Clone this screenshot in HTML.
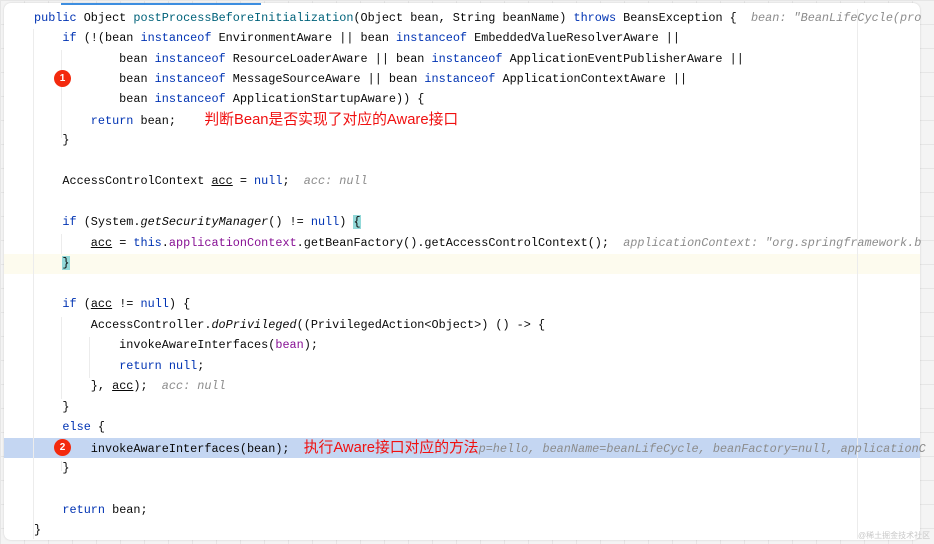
<!DOCTYPE html>
<html><head><meta charset="utf-8"><style>
body{margin:0;width:934px;height:544px;overflow:hidden;background:#f4f4f4;
background-image:linear-gradient(#e6e6e6 1px,transparent 1px),linear-gradient(90deg,#e6e6e6 1px,transparent 1px);background-size:24px 24px;position:relative;font-family:"Liberation Mono",monospace}
.card{position:absolute;left:4px;top:3px;width:916px;height:537px;background:#fff;border-radius:7px;overflow:hidden;box-shadow:0 0 2px rgba(0,0,0,.15)}
.tab{position:absolute;left:57px;top:0;width:200px;height:2px;background:#3d8ee0}
.l{position:absolute;left:0;height:20px;line-height:20px;font-size:11.84px;color:#080808;white-space:pre}
.k{color:#0033b3}.m{color:#00627a}.f{color:#871094}.h{color:#8c8c8c;font-style:italic}.i{font-style:italic}
.p{color:#871094}.u{text-decoration:underline}
.b{background:#93d9d9}
.cn{color:#f01010;font-family:"Liberation Sans","Noto Sans CJK SC",sans-serif;font-size:14.8px}
.dot{position:absolute;width:17px;height:17px;border-radius:50%;background:#f32a0e;color:#fff;font:bold 10px "Liberation Sans",sans-serif;text-align:center;line-height:17px}
.g{position:absolute;width:1px;background:#ececec}
</style></head><body>
<div class="card">
<div class="tab"></div>
<div style="position:absolute;left:0;top:251px;width:916px;height:20px;background:#fdfbee"></div>
<div style="position:absolute;left:0;top:435px;width:916px;height:20px;background:#c4d6f2"></div>
<div class="g" style="left:29px;top:26px;height:510px"></div>
<div class="g" style="left:57px;top:47px;height:88px"></div>
<div class="g" style="left:57px;top:231px;height:20px"></div>
<div class="g" style="left:57px;top:314px;height:82px"></div>
<div class="g" style="left:85px;top:334px;height:41px"></div>
<div class="g" style="left:57px;top:458px;height:10px"></div>
<div class="g" style="left:853px;top:6px;height:530px"></div>
</div>
<div style="position:absolute;left:34px;top:0">
<div class="l" style="top:8px"><span class="k">public</span> Object <span class="m">postProcessBeforeInitialization</span>(Object bean, String beanName) <span class="k">throws</span> BeansException {  <span class="h">bean: "BeanLifeCycle(pro</span></div>
<div class="l" style="top:28px">    <span class="k">if</span> (!(bean <span class="k">instanceof</span> EnvironmentAware || bean <span class="k">instanceof</span> EmbeddedValueResolverAware ||</div>
<div class="l" style="top:49px">            bean <span class="k">instanceof</span> ResourceLoaderAware || bean <span class="k">instanceof</span> ApplicationEventPublisherAware ||</div>
<div class="l" style="top:69px">            bean <span class="k">instanceof</span> MessageSourceAware || bean <span class="k">instanceof</span> ApplicationContextAware ||</div>
<div class="l" style="top:89px">            bean <span class="k">instanceof</span> ApplicationStartupAware)) {</div>
<div class="l" style="top:110px">        <span class="k">return</span> bean;    <span class="cn">判断Bean是否实现了对应的Aware接口</span></div>
<div class="l" style="top:130px">    }</div>
<div class="l" style="top:171px">    AccessControlContext <span class="u">acc</span> = <span class="k">null</span>;  <span class="h">acc: null</span></div>
<div class="l" style="top:212px">    <span class="k">if</span> (System.<span class="i">getSecurityManager</span>() != <span class="k">null</span>) <span class="b">{</span></div>
<div class="l" style="top:233px">        <span class="u">acc</span> = <span class="k">this</span>.<span class="f">applicationContext</span>.getBeanFactory().getAccessControlContext();  <span class="h">applicationContext: "org.springframework.b</span></div>
<div class="l" style="top:253px">    <span class="b">}</span></div>
<div class="l" style="top:294px">    <span class="k">if</span> (<span class="u">acc</span> != <span class="k">null</span>) {</div>
<div class="l" style="top:315px">        AccessController.<span class="i">doPrivileged</span>((PrivilegedAction&lt;Object&gt;) () -&gt; {</div>
<div class="l" style="top:335px">            invokeAwareInterfaces(<span class="p">bean</span>);</div>
<div class="l" style="top:356px">            <span class="k">return null</span>;</div>
<div class="l" style="top:376px">        }, <span class="u">acc</span>);  <span class="h">acc: null</span></div>
<div class="l" style="top:397px">    }</div>
<div class="l" style="top:417px">    <span class="k">else</span> {</div>
<div class="l" style="top:438px">        invokeAwareInterfaces(bean);  <span class="cn">执行Aware接口对应的方法</span><span class="h">p=hello, beanName=beanLifeCycle, beanFactory=null, applicationC</span></div>
<div class="l" style="top:458px">    }</div>
<div class="l" style="top:500px">    <span class="k">return</span> bean;</div>
<div class="l" style="top:520px">}</div>
</div>
<div class="dot" style="left:54px;top:70px">1</div>
<div class="dot" style="left:54px;top:439px">2</div>
<div style="position:absolute;left:858px;top:530px;font:8px 'Liberation Sans','Noto Sans CJK SC',sans-serif;color:#c8c8c8">@稀土掘金技术社区</div>
</body></html>
